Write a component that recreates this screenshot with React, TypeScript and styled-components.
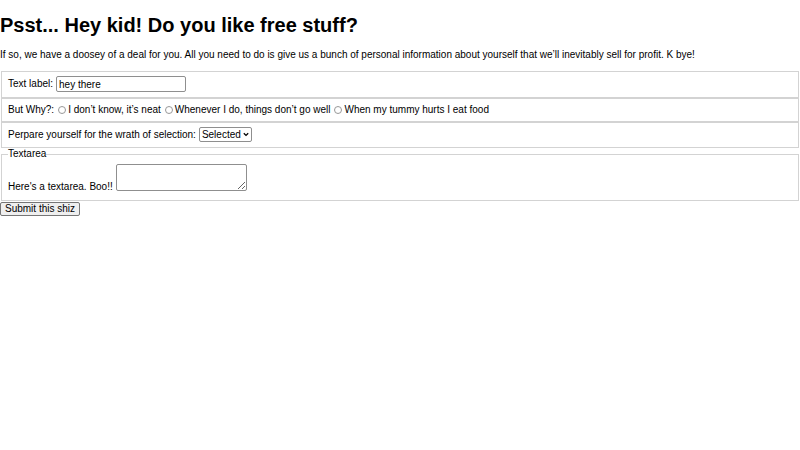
import styled, { createGlobalStyle } from "styled-components";

const GlobalStyle = createGlobalStyle`
  body {
    margin: 0;
    font-family: "Liberation Sans", Arial, sans-serif;
    font-size: 10px;
    line-height: 12px;
    color: #000;
    background: #fff;
  }
`;

const Title = styled.h1`
  font-size: 20px;
  font-weight: bold;
  line-height: 24px;
  margin: 13px 0 0;
`;

const Intro = styled.p`
  margin: 12px 0 10px;
`;

const Group = styled.fieldset`
  margin: 0 1px;
  padding: 4px 6px 5px;
  border: 1px solid #d3d3d3;
  min-width: 0;
`;

const Legend = styled.legend`
  padding: 0;
  line-height: 12px;
`;

const Row = styled.label<{ $bottom?: boolean }>`
  display: flex;
  align-items: ${(p) => (p.$bottom ? "flex-end" : "center")};
  gap: 3px;
  min-height: 13px;
  white-space: nowrap;
`;

const Caption = styled.span<{ $lift?: number }>`
  margin-bottom: ${(p) => p.$lift ?? 0}px;
`;

const Choice = styled.label`
  display: inline-flex;
  align-items: center;
  gap: 2px;
`;

const TextInput = styled.input`
  font: inherit;
  width: 130px;
  height: 16px;
  box-sizing: border-box;
  margin: 0;
  padding: 0 2px;
  border: 1px solid #8f8f8f;
  border-radius: 2px;
`;

const Radio = styled.input`
  width: 8px;
  height: 8px;
  margin: 0 0 0 1px;
  opacity: 0.75;
`;

const SelectWrap = styled.span`
  position: relative;
  display: inline-flex;
`;

const Select = styled.select`
  appearance: none;
  font: inherit;
  color: #000;
  width: 53px;
  height: 15px;
  box-sizing: border-box;
  margin: 0;
  padding: 0 10px 0 2px;
  border: 1px solid #8f8f8f;
  border-radius: 2px;
  background: #fff;
`;

const Chevron = styled.svg`
  position: absolute;
  right: 3px;
  top: 5px;
  width: 6px;
  height: 5px;
  pointer-events: none;
`;

const TextArea = styled.textarea`
  width: 131px;
  height: 27px;
  box-sizing: border-box;
  margin: 0 0 4px;
  border: 1px solid #8f8f8f;
  border-radius: 2px;
`;

const SubmitButton = styled.button`
  display: block;
  font: inherit;
  height: 14px;
  margin-top: 1px;
  padding: 0 4px;
  line-height: 12px;
  border: 1px solid #767676;
  border-radius: 2px;
  background: #efefef;
  color: #000;
`;

const App = () => {
  return (
    <>
      <GlobalStyle />
      <Title>Psst... Hey kid! Do you like free stuff?</Title>
      <Intro>
        If so, we have a doosey of a deal for you. All you need to do is give us a bunch of
        personal information about yourself that we’ll inevitably sell for profit. K bye!
      </Intro>
      <form onSubmit={(e) => e.preventDefault()}>
        <Group>
          <Row>
            Text label: <TextInput type="text" defaultValue="hey there" />
          </Row>
        </Group>
        <Group>
          <Row as="div">
            But Why?:
            <Choice>
              <Radio type="radio" name="why" />I don’t know, it’s neat
            </Choice>
            <Choice>
              <Radio type="radio" name="why" />Whenever I do, things don’t go well
            </Choice>
            <Choice>
              <Radio type="radio" name="why" />When my tummy hurts I eat food
            </Choice>
          </Row>
        </Group>
        <Group>
          <Row>
            Perpare yourself for the wrath of selection:
            <SelectWrap>
              <Select defaultValue="selected">
                <option value="selected">Selected</option>
                <option value="other">Other</option>
              </Select>
              <Chevron viewBox="0 0 6 5">
                <path d="M0.8 1.2 L3 3.4 L5.2 1.2" fill="none" stroke="#000" strokeWidth="1.3" />
              </Chevron>
            </SelectWrap>
          </Row>
        </Group>
        <Group>
          <Legend>Textarea</Legend>
          <Row $bottom>
            <Caption $lift={2}>Here's a textarea. Boo!!</Caption>
            <TextArea />
          </Row>
        </Group>
        <SubmitButton type="submit">Submit this shiz</SubmitButton>
      </form>
    </>
  );
};

export default App;
